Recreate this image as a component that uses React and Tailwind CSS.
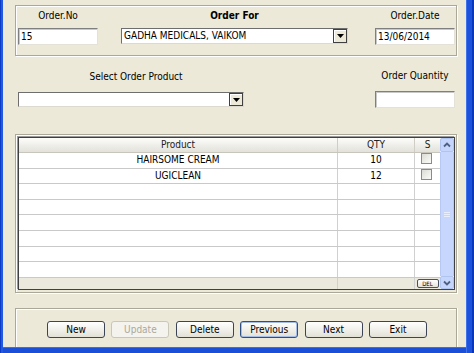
import React from 'react';

const FONT = { fontFamily: 'Tahoma, "DejaVu Sans Condensed", "Liberation Sans", sans-serif' };

const products = [
	{ name: 'HAIRSOME CREAM', qty: '10' },
	{ name: 'UGICLEAN', qty: '12' },
	{}, {}, {}, {}, {}, {},
];

const buttons = ['New', 'Update', 'Delete', 'Previous', 'Next', 'Exit'];

function TextBox({ value = '', className = '' }) {
	return (
		<div className={`h-[17px] bg-white border border-t-[#7f7f7f] border-l-[#7f7f7f] border-b-[#e4e2d8] border-r-[#e4e2d8] shadow-[inset_1px_1px_0_#c8c8c8] flex items-center pl-[2px] text-[10px] text-black ${className}`}>
			{value}
		</div>
	);
}

function ComboBox({ value = '', className = '', h = 'h-[16px]' }) {
	return (
		<div className={`${h} bg-white border border-t-[#6e6e6e] border-l-[#6e6e6e] border-b-[#dcdad0] border-r-[#dcdad0] flex items-center ${className}`}>
			<span className="flex-1 pl-[2px] text-[10px] text-black leading-none">{value}</span>
			<span className="w-[14px] h-full bg-[#ece9d8] border border-[#404040] shadow-[inset_1px_1px_0_#fff] flex items-center justify-center">
				<svg width="7" height="4" viewBox="0 0 7 4"><path d="M0 0h7L3.5 4z" fill="#000" /></svg>
			</span>
		</div>
	);
}

function Chevron({ down }) {
	return (
		<svg width="8" height="6" viewBox="0 0 8 6">
			<path d={down ? 'M1 1.5l3 3 3-3' : 'M1 4.5l3-3 3 3'} stroke="#4d6185" strokeWidth="1.8" fill="none" />
		</svg>
	);
}

export default function App() {
	return (
		<div className="w-[474px] h-[353px] flex bg-[#1c50dc] overflow-hidden" style={FONT}>
			{/* left window border */}
			<div className="w-[3px] bg-[#2259e3] border-l border-[#0c3bc4]" />

			<div className="flex-1 flex flex-col">
				<div className="flex-1 bg-[#ece9d8] pl-[12px] pr-[9px] pt-[5px] flex flex-col overflow-hidden">
					{/* Order header group */}
					<div className="shrink-0 h-[51px] border border-[#aca899] shadow-[inset_1px_1px_0_#fff,1px_1px_0_#fff] flex pl-[2px] pr-[1px] pt-[4px]">
						<div className="w-[80px] flex flex-col">
							<div className="h-[12px] leading-[12px] text-center text-[10px] text-black">Order.No</div>
							<TextBox value="15" className="mt-[6px]" />
						</div>
						<div className="w-[227px] ml-[23px] flex flex-col">
							<div className="h-[12px] leading-[12px] text-center text-[10px] font-bold text-black">Order For</div>
							<ComboBox value="GADHA MEDICALS, VAIKOM" className="mt-[6px]" />
						</div>
						<div className="w-[80px] ml-[27px] flex flex-col">
							<div className="h-[12px] leading-[12px] text-center text-[10px] text-black">Order.Date</div>
							<TextBox value="13/06/2014" className="mt-[6px]" />
						</div>
					</div>

					{/* Product selection */}
					<div className="shrink-0 h-[78px] flex pl-[3px] pr-[2px] pt-[15px]">
						<div className="w-[226px] flex flex-col">
							<div className="h-[12px] leading-[12px] text-center pl-[10px] text-[10px] text-black">Select Order Product</div>
							<ComboBox className="mt-[9px]" h="h-[15px]" />
						</div>
						<div className="flex-1" />
						<div className="w-[80px] flex flex-col">
							<div className="h-[12px] leading-[12px] text-center text-[10px] text-black -mt-[1px]">Order Quantity</div>
							<TextBox className="mt-[9px]" />
						</div>
					</div>

					{/* Product grid group */}
					<div className="shrink-0 h-[159px] border border-[#aca899] shadow-[inset_1px_1px_0_#fff,1px_1px_0_#fff] pl-[2px] pr-0 pt-[2px]">
						<div className="w-[437px] h-[153px] border border-[#404040] shadow-[-1px_-1px_0_#9a9a9a] flex bg-white">
							<div className="flex-1 flex flex-col">
								{/* header */}
								<div className="shrink-0 h-[15px] flex bg-gradient-to-b from-[#fdfdfb] to-[#e2e1da] border-b border-[#c8c6bc] text-[10px] text-[#222] leading-[14px]">
									<div className="w-[319px] text-center border-r border-[#d0cec4]">Product</div>
									<div className="w-[77px] text-center border-r border-[#d0cec4]">QTY</div>
									<div className="flex-1 text-center">S</div>
								</div>
								{products.map((p, i) => (
									<div key={i} className="shrink-0 h-[15.6px] flex border-b border-[#c9c9c9] text-[10px] text-black leading-[14px]">
										<div className="w-[319px] text-center border-r border-[#d0d0d0]">{p.name}</div>
										<div className="w-[77px] text-center border-r border-[#d0d0d0]">{p.qty}</div>
										<div className="flex-1 flex justify-center">
											{p.name && (
												<span className="w-[11px] h-[11px] border border-[#7a8ea8] bg-gradient-to-br from-[#dcdcd6] to-[#fbfbf9] mr-[2px]" />
											)}
										</div>
									</div>
								))}
								{/* footer */}
								<div className="flex-1 flex bg-[#ebe9dd]">
									<div className="w-[319px] border-r border-[#d0d0d0]" />
									<div className="w-[77px] border-r border-[#d0d0d0]" />
									<div className="flex-1 flex items-end justify-center pb-[1px]">
										<span className="w-[22px] h-[9px] rounded-[2px] border border-[#4a5060] bg-gradient-to-b from-white to-[#e4e2d8] text-[6px] leading-[7px] text-center text-black">DEL</span>
									</div>
								</div>
							</div>
							{/* scrollbar */}
							<div className="w-[14px] flex flex-col bg-[#eef3fd]">
								<div className="h-[14px] bg-[#c5d5fb] border border-[#b0c4f0] rounded-[2px] flex items-center justify-center">
									<Chevron />
								</div>
								<div className="flex-1 bg-[#c7d6fc] border-x border-[#b6c8f3] flex items-center justify-center">
									<div className="flex flex-col gap-[1px]">
										<span className="w-[6px] h-px bg-[#e8eefc]" />
										<span className="w-[6px] h-px bg-[#e8eefc]" />
										<span className="w-[6px] h-px bg-[#e8eefc]" />
									</div>
								</div>
								<div className="h-[13px] bg-[#c5d5fb] border border-[#b0c4f0] rounded-[2px] flex items-center justify-center">
									<Chevron down />
								</div>
							</div>
						</div>
					</div>

					{/* Button group */}
					<div className="shrink-0 mt-[15px] h-[45px] border border-b-0 border-[#aca899] shadow-[inset_1px_1px_0_#fff,1px_0_0_#fff] flex gap-[6.4px] pl-[31px] pt-[12px]">
						{buttons.map((b) => {
							const disabled = b === 'Update';
							const focused = b === 'Previous';
							return (
								<div
									key={b}
									className={`w-[58px] h-[17px] rounded-[3px] border text-[10px] leading-[15px] text-center ${
										disabled
											? 'border-[#c9c7ba] bg-[#f4f3ee] text-[#aca899]'
											: focused
												? 'border-[#2f4f82] bg-gradient-to-b from-white to-[#e3e1d6] text-black shadow-[inset_0_0_0_1px_#a6bde8]'
												: 'border-[#3c4456] bg-gradient-to-b from-white to-[#e3e1d6] text-black'
									}`}
								>
									{b}
								</div>
							);
						})}
					</div>
				</div>
				{/* bottom window border */}
				<div className="h-[6px] bg-[#1c4fd8] border-t border-[#3a6ee8]" />
			</div>

			{/* right window border */}
			<div className="w-[8px] bg-[#1d52dc] border-l border-[#3d72ea] border-r-2 border-r-[#0a36b8]" />
		</div>
	);
}
